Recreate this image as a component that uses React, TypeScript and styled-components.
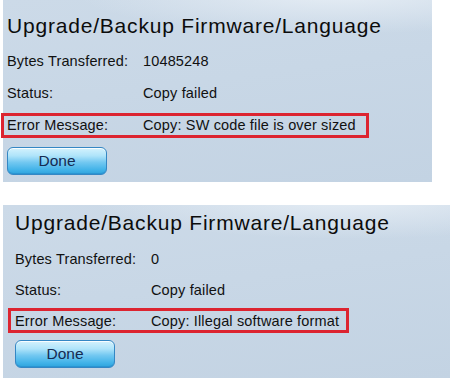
import React from "react";
import styled, { createGlobalStyle } from "styled-components";

const Global = createGlobalStyle`
  html, body { margin: 0; padding: 0; background: #ffffff; }
  body { font-family: "Liberation Sans", Arial, sans-serif; }
`;

const Page = styled.div`
  width: 453px;
  height: 385px;
  box-sizing: border-box;
  padding-left: 3px;
  display: flex;
  flex-direction: column;
  gap: 23px;
  overflow: hidden;
`;

const Panel = styled.section<{ $w: number; $h: number; $pt: number; $pl: number }>`
  width: ${(p) => p.$w}px;
  height: ${(p) => p.$h}px;
  box-sizing: border-box;
  padding: ${(p) => p.$pt}px 0 0 ${(p) => p.$pl}px;
  display: flex;
  flex-direction: column;
  background:
    radial-gradient(ellipse 260px 40px at 78% -6px, rgba(232, 239, 246, 0.9), rgba(232, 239, 246, 0) 100%),
    linear-gradient(172deg, #ccdae8 0%, #c8d7e6 45%, #c3d3e3 100%);
`;

const Title = styled.h1<{ $mb: number }>`
  margin: 0 0 ${(p) => p.$mb}px 0;
  font-size: 21px;
  line-height: 24px;
  font-weight: normal;
  letter-spacing: 0.8px;
  color: #0c0c0c;
  white-space: nowrap;
`;

const Row = styled.div<{ $h: number }>`
  position: relative;
  height: ${(p) => p.$h}px;
  display: flex;
  align-items: center;
  font-size: 14.5px;
  letter-spacing: 0.15px;
  color: #111111;
  white-space: nowrap;
`;

const Label = styled.span`
  width: 136px;
  flex: none;
`;

const Value = styled.span``;

const Highlight = styled.div<{ $left: number; $top: number; $w: number; $h: number }>`
  position: absolute;
  left: ${(p) => p.$left}px;
  top: ${(p) => p.$top}px;
  width: ${(p) => p.$w}px;
  height: ${(p) => p.$h}px;
  box-sizing: border-box;
  border: 3px solid #dc2430;
  pointer-events: none;
`;

const DoneButton = styled.button<{ $mt: number }>`
  margin-top: ${(p) => p.$mt}px;
  width: 100px;
  height: 28px;
  box-sizing: border-box;
  padding: 0;
  border: 1px solid #3487c4;
  border-radius: 6px;
  background: linear-gradient(
    to bottom,
    #d4f2fd 0%,
    #afe4fa 30%,
    #73c8f1 55%,
    #40b2e8 85%,
    #2fa3dc 100%
  );
  box-shadow: inset 0 1px 0 rgba(255, 255, 255, 0.85), inset 0 -1px 0 rgba(30, 120, 190, 0.35);
  font-family: "Liberation Sans", Arial, sans-serif;
  font-size: 15.5px;
  color: #162b52;
  cursor: pointer;
`;

type Data = {
  bytes: string;
  status: string;
  error: string;
};

type Geometry = {
  w: number;
  h: number;
  pt: number;
  pl: number;
  titleMb: number;
  rowH: number;
  btnMt: number;
  hl: { left: number; top: number; w: number; h: number };
};

function StatusPanel({ d, g }: { d: Data; g: Geometry }) {
  return (
    <Panel $w={g.w} $h={g.h} $pt={g.pt} $pl={g.pl}>
      <Title $mb={g.titleMb}>Upgrade/Backup Firmware/Language</Title>
      <Row $h={g.rowH}>
        <Label>Bytes Transferred:</Label>
        <Value>{d.bytes}</Value>
      </Row>
      <Row $h={g.rowH}>
        <Label>Status:</Label>
        <Value>{d.status}</Value>
      </Row>
      <Row $h={g.rowH}>
        <Label>Error Message:</Label>
        <Value>{d.error}</Value>
        <Highlight $left={g.hl.left} $top={g.hl.top} $w={g.hl.w} $h={g.hl.h} />
      </Row>
      <DoneButton $mt={g.btnMt}>Done</DoneButton>
    </Panel>
  );
}

export default function App() {
  return (
    <>
      <Global />
      <Page>
        <StatusPanel
          d={{ bytes: "10485248", status: "Copy failed", error: "Copy: SW code file is over sized" }}
          g={{
            w: 429,
            h: 182,
            pt: 14,
            pl: 4,
            titleMb: 7,
            rowH: 32,
            btnMt: 6,
            hl: { left: -6, top: 4, w: 368, h: 25 },
          }}
        />
        <StatusPanel
          d={{ bytes: "0", status: "Copy failed", error: "Copy: Illegal software format" }}
          g={{
            w: 447,
            h: 173,
            pt: 6,
            pl: 12,
            titleMb: 8,
            rowH: 31,
            btnMt: 4,
            hl: { left: -7, top: 3, w: 341, h: 25 },
          }}
        />
      </Page>
    </>
  );
}
